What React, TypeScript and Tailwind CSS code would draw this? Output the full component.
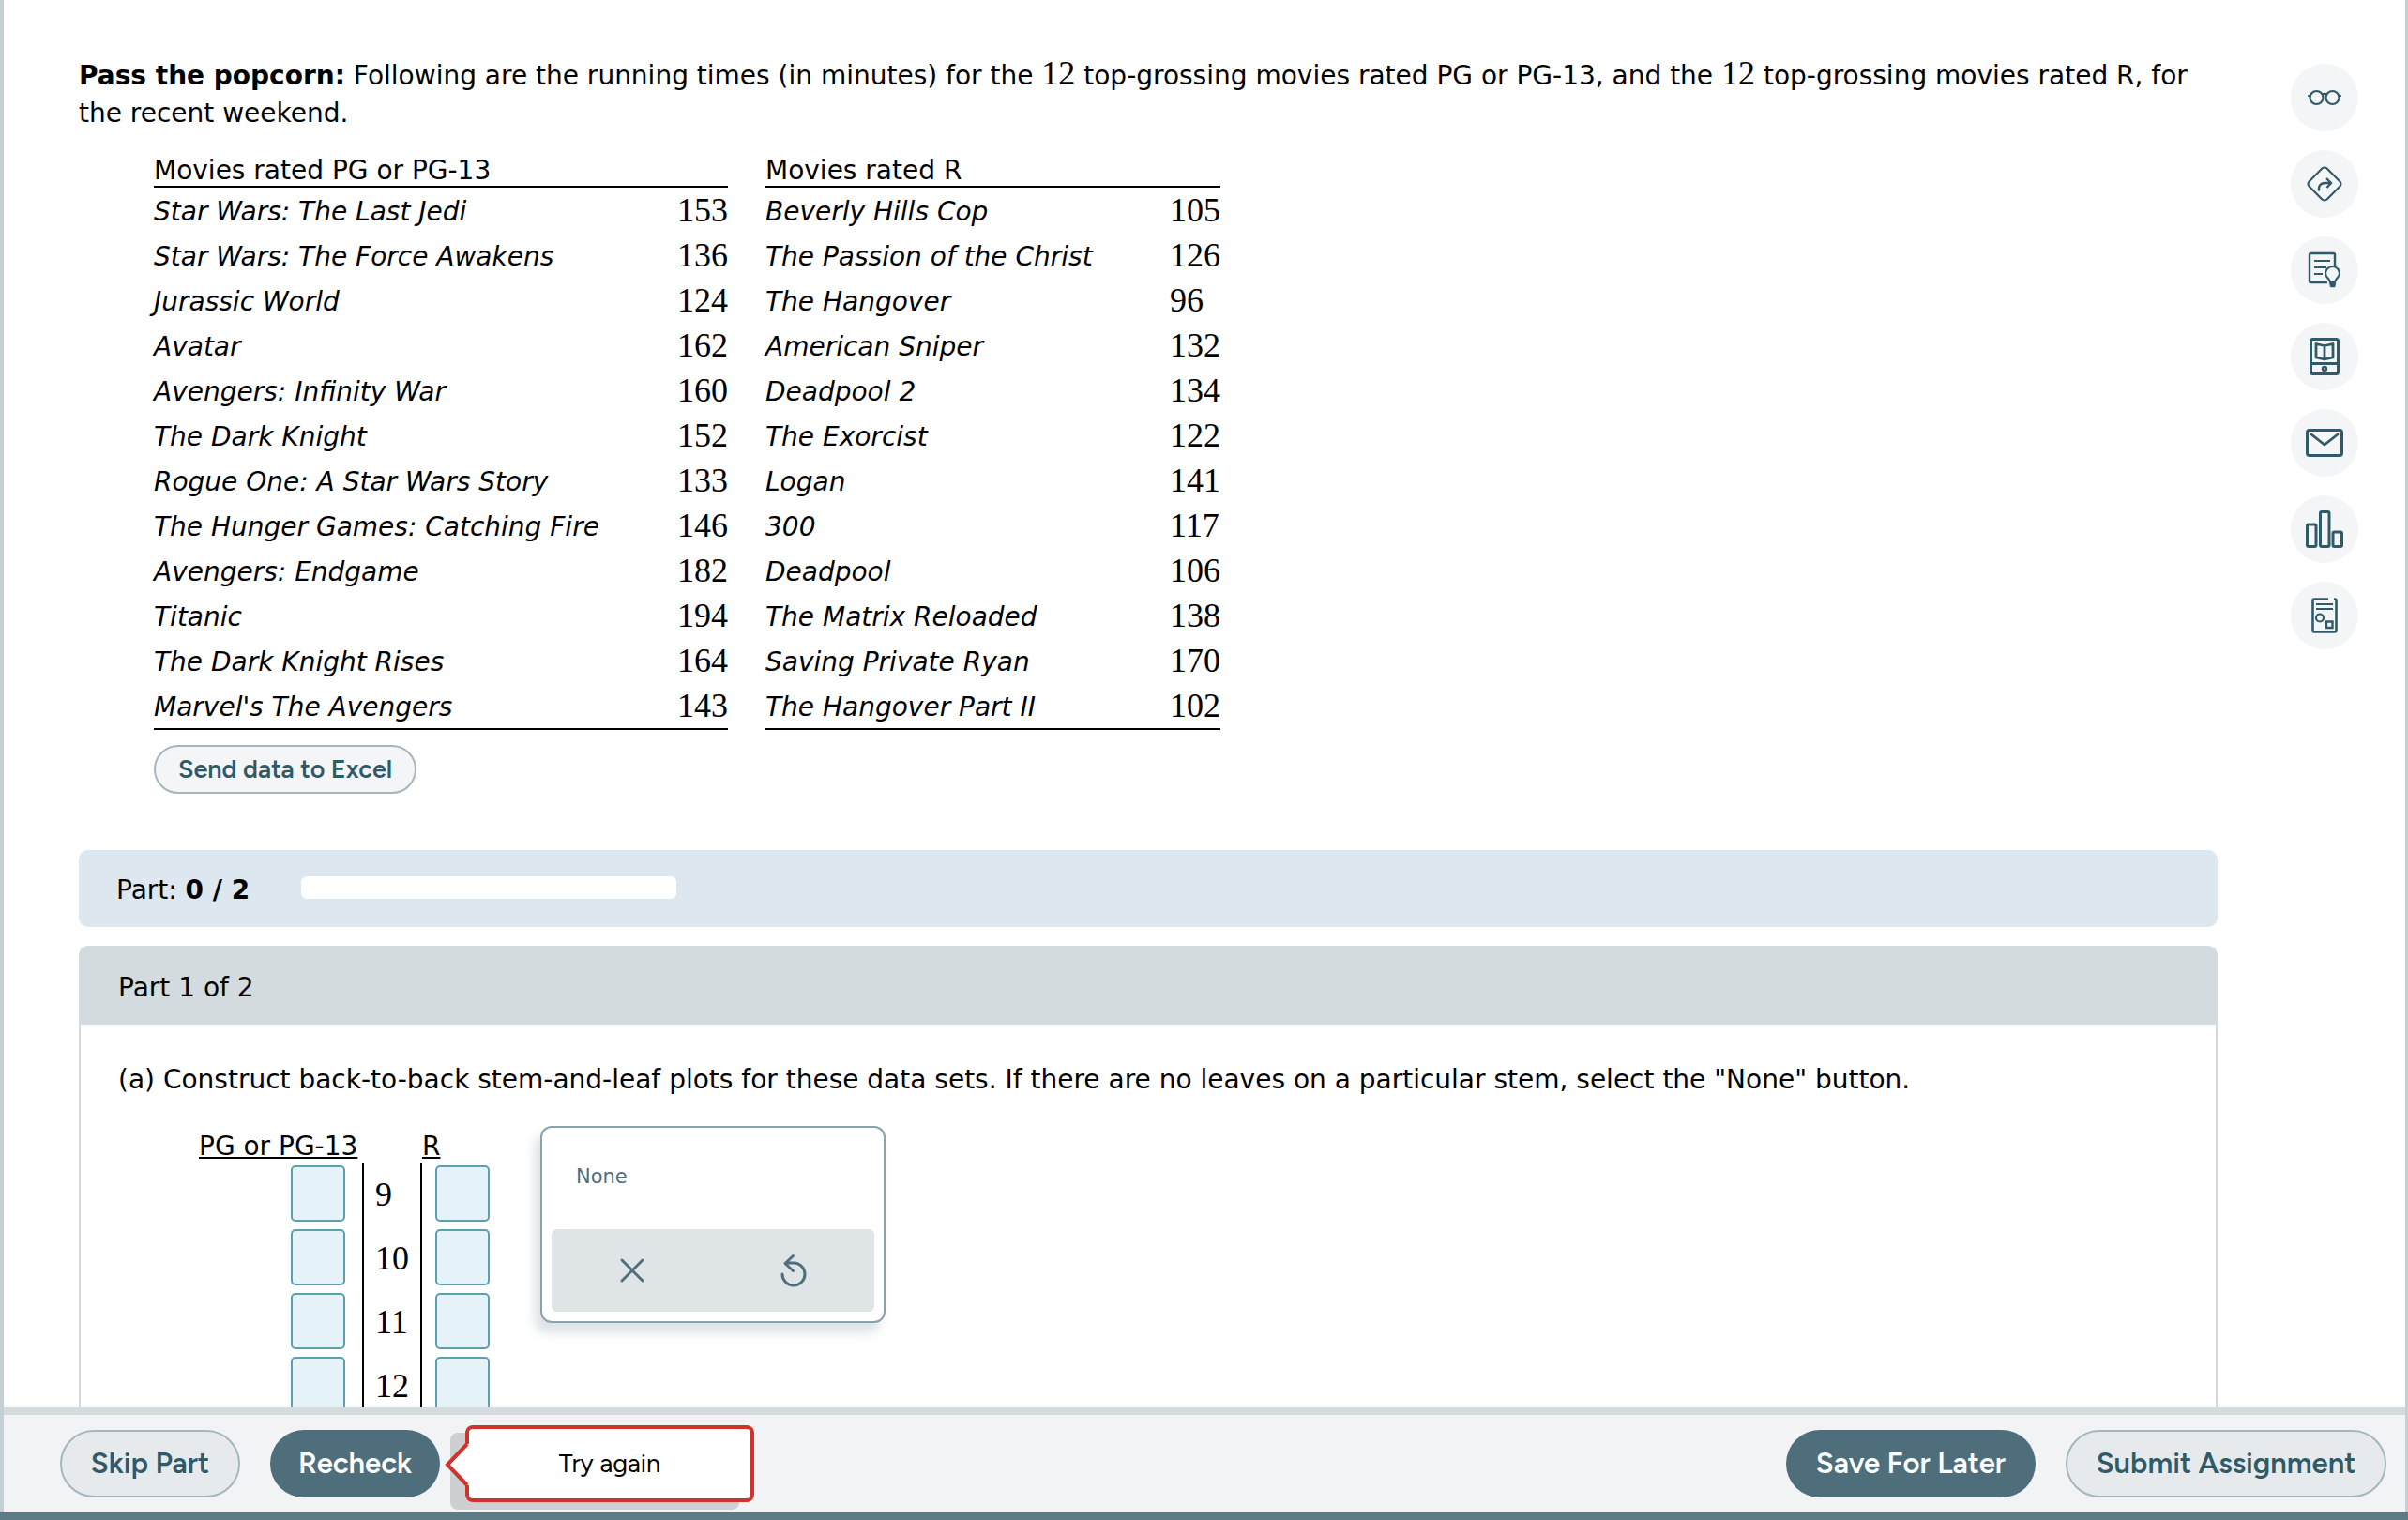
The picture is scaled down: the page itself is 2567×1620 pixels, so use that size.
import type { ReactNode } from "react";

type Movie = [title: string, minutes: number];

const pgMovies: Movie[] = [
  ["Star Wars: The Last Jedi", 153],
  ["Star Wars: The Force Awakens", 136],
  ["Jurassic World", 124],
  ["Avatar", 162],
  ["Avengers: Infinity War", 160],
  ["The Dark Knight", 152],
  ["Rogue One: A Star Wars Story", 133],
  ["The Hunger Games: Catching Fire", 146],
  ["Avengers: Endgame", 182],
  ["Titanic", 194],
  ["The Dark Knight Rises", 164],
  ["Marvel's The Avengers", 143],
];

const rMovies: Movie[] = [
  ["Beverly Hills Cop", 105],
  ["The Passion of the Christ", 126],
  ["The Hangover", 96],
  ["American Sniper", 132],
  ["Deadpool 2", 134],
  ["The Exorcist", 122],
  ["Logan", 141],
  ["300", 117],
  ["Deadpool", 106],
  ["The Matrix Reloaded", 138],
  ["Saving Private Ryan", 170],
  ["The Hangover Part II", 102],
];

const stems = [9, 10, 11, 12];

const serif = "font-['Liberation_Serif',serif] text-[36px] leading-none";
const ui = "font-['Figtree','Proxima_Nova',Lato,sans-serif]";

function Num({ children }: { children: ReactNode }) {
  return <span className={serif}>{children}</span>;
}

function Icon({ children }: { children: ReactNode }) {
  return (
    <svg width="44" height="44" viewBox="0 0 44 44" fill="none" stroke="currentColor" strokeWidth="2.4" strokeLinecap="round" strokeLinejoin="round" aria-hidden="true">
      {children}
    </svg>
  );
}

const tools: { label: string; icon: ReactNode }[] = [
  {
    label: "Reading view",
    icon: (
      <Icon>
        <g strokeWidth="2.2">
          <circle cx="13.5" cy="22" r="7" />
          <circle cx="30.5" cy="22" r="7" />
          <path d="M20 18.500c1-1 3-1 4 0M5 20h2M37 20h2" />
        </g>
      </Icon>
    ),
  },
  {
    label: "Directions",
    icon: (
      <Icon>
        <rect x="8.5" y="8.5" width="27" height="27" rx="4" transform="rotate(45 22 22)" strokeWidth="2.2" />
        <path d="M16 29.500c-.6-6 2-8.500 7-8.500h5M24 16l5 5-4.500 5" strokeLinecap="butt" strokeLinejoin="miter" />
      </Icon>
    ),
  },
  {
    label: "Hints",
    icon: (
      <Icon>
        <path d="M33 17V5.500a1.500 1.500 0 0 0-1.500-1.500h-24A1.500 1.500 0 0 0 6 5.500v28A1.500 1.500 0 0 0 7.500 35H25" strokeWidth="2.400" strokeLinecap="butt" />
        <path d="M11 12h17M11 19h13M11 26h9" strokeWidth="2.200" strokeLinecap="butt" />
        <path d="M28 35c0-4-5-5-5-9.500a7.500 7.500 0 0 1 15 0c0 4.500-5 5.500-5 9.500z" strokeWidth="2.200" />
        <path d="M27.500 36h6.500l-1 4h-4.500z" fill="currentColor" strokeWidth="0.5" />
      </Icon>
    ),
  },
  {
    label: "eBook",
    icon: (
      <Icon>
        <rect x="7.500" y="3.500" width="29" height="37" rx="2" strokeWidth="3" />
        <path d="M7.500 29.500h29" strokeWidth="2.800" />
        <circle cx="22" cy="35" r="2" strokeWidth="2.400" />
        <path d="M22 10.500l-9-2v14.500l9 2 9-2V8.500zM22 10.500V25" strokeWidth="2.800" />
      </Icon>
    ),
  },
  {
    label: "Message",
    icon: (
      <Icon>
        <rect x="3.500" y="8.500" width="37" height="27" rx="2.500" strokeWidth="3" />
        <path d="M8 13l14 11 14-11" strokeWidth="2.800" />
      </Icon>
    ),
  },
  {
    label: "Report",
    icon: (
      <Icon>
        <g strokeWidth="3">
          <rect x="3.500" y="17" width="9.500" height="23.500" rx="1.500" />
          <rect x="17.500" y="3.500" width="9.500" height="37" rx="1.500" />
          <rect x="31" y="25" width="9.500" height="15.500" rx="1.500" />
        </g>
      </Icon>
    ),
  },
  {
    label: "Formula sheet",
    icon: (
      <Icon>
        <path d="M26 4.500H11A1.500 1.500 0 0 0 9.500 6v32A1.500 1.500 0 0 0 11 39.500h22a1.500 1.500 0 0 0 1.500-1.500V6A1.500 1.500 0 0 0 33 4.500H32" strokeWidth="2.600" strokeLinecap="butt" />
        <path d="M13 10h18M13 15h18" strokeWidth="2.200" strokeLinecap="butt" />
        <circle cx="17" cy="24.500" r="4" strokeWidth="2.200" />
        <path d="M24 28.500h6.500V35H24z" strokeWidth="2.400" strokeLinejoin="miter" />
      </Icon>
    ),
  },
];

function LeafBox({ label }: { label: string }) {
  return (
    <button type="button" aria-label={label} className="block h-[60px] w-[58px] rounded-[5px] border-2 border-[#5c9fb0] bg-[#e5f3f8]" />
  );
}

function MovieTable() {
  return (
    <table className="border-separate border-spacing-0 text-left text-[28px]">
      <thead>
        <tr className="h-[40px]">
          <th colSpan={2} className="border-b-2 border-black pt-1.5 font-normal leading-[32px]">Movies rated PG or PG-13</th>
          <td className="w-[40px] min-w-[40px]" />
          <th colSpan={2} className="border-b-2 border-black pt-1.5 font-normal leading-[32px]">Movies rated R</th>
        </tr>
      </thead>
      <tbody>
        {pgMovies.map(([title, minutes], i) => {
          const line = i === pgMovies.length - 1 ? "border-b-2 border-black pt-1 leading-[40px]" : "pt-1 leading-[40px]";
          return (
            <tr key={title} className={i === pgMovies.length - 1 ? "h-[50px]" : "h-[48px]"}>
              <td className={`w-[558px] italic ${line}`}>{title}</td>
              <td className={`w-[54px] ${line}`}><Num>{minutes}</Num></td>
              <td />
              <td className={`w-[431px] italic ${line}`}>{rMovies[i][0]}</td>
              <td className={`w-[54px] ${line}`}><Num>{rMovies[i][1]}</Num></td>
            </tr>
          );
        })}
      </tbody>
    </table>
  );
}

function StemLeafPlot() {
  return (
    <table className="border-separate border-spacing-0 text-[28px]">
      <thead>
        <tr className="h-[40px]">
          <th className="w-[174px] min-w-[174px] p-0 pt-1 text-left font-normal leading-[36px]"><span className="underline decoration-2 underline-offset-2">PG or PG-13</span></th>
          <td className="w-[64px] min-w-[64px] p-0" />
          <th className="p-0 pt-1 text-left font-normal leading-[36px]"><span className="underline decoration-2 underline-offset-2">R</span></th>
        </tr>
      </thead>
      <tbody>
        {stems.map((stem) => (
          <tr key={stem} className="h-[68px]">
            <td className="pr-[18px] pt-[2px] pb-[6px]">
              <div className="flex justify-end"><LeafBox label={`PG or PG-13 leaves for stem ${stem}`} /></div>
            </td>
            <td className="border-x-2 border-black pt-1 pl-3"><Num>{stem}</Num></td>
            <td className="pl-[14px] pt-[2px] pb-[6px]"><LeafBox label={`R leaves for stem ${stem}`} /></td>
          </tr>
        ))}
      </tbody>
    </table>
  );
}

function Palette() {
  return (
    <div className="flex h-[210px] w-[368px] flex-col justify-between rounded-xl border-2 border-[#8aa2ac] bg-white px-[10px] pb-[10px] shadow-[-6px_10px_12px_rgba(80,112,125,0.2)]">
      <div className="flex h-[106px] items-center px-[26px]">
        <button type="button" className="text-[21px] text-[#4f6f7c]">None</button>
      </div>
      <div className="grid h-[88px] grid-cols-2 place-items-center rounded-md bg-[#dfe5e7] text-[#4f6f7c]">
        <button type="button" aria-label="Clear">
          <svg width="28" height="28" viewBox="0 0 28 28" fill="none" stroke="currentColor" strokeWidth="3" strokeLinecap="round" aria-hidden="true">
            <path d="M3 3l22 22M25 3L3 25" />
          </svg>
        </button>
        <button type="button" aria-label="Reset">
          <svg width="32" height="36" viewBox="0 0 32 36" fill="none" stroke="currentColor" strokeWidth="3" strokeLinecap="round" strokeLinejoin="round" aria-hidden="true">
            <path d="M4 22a12 12 0 1 0 12-12H8M15.500 2.500L7 10.500l8.500 8" />
          </svg>
        </button>
      </div>
    </div>
  );
}

function Callout() {
  return (
    <div role="status" className="relative ml-[27px] flex h-[82px] w-[308px] items-center justify-center rounded-lg border-4 border-[#d1322d] bg-white text-[27px] text-black shadow-[-16px_8px_0_#cdcfd1]">
      Try again
      <svg className="absolute top-[13px] left-[-28px]" width="30" height="50" viewBox="0 0 30 50" aria-hidden="true">
        <path d="M30 3L26 3 5 25 26 47 30 47z" fill="#fff" />
        <path d="M26 3L5 25 26 47" fill="none" stroke="#d1322d" strokeWidth="4" />
      </svg>
    </div>
  );
}

const pill = "h-[72px] rounded-full text-[31px] font-semibold";
const solid = "bg-[#4f6e7b] text-white";
const outline = "border-2 border-[#a5b7be] bg-[#e6eaed] text-[#315a68]";

export default function App() {
  return (
    <div className="flex h-screen flex-col overflow-hidden bg-white font-[Verdana,'DejaVu_Sans',sans-serif] text-black">
      <div className="flex min-h-0 flex-1 flex-col border-r-3 border-l-4 border-[#c5d0d5]">
        <div className="flex min-h-0 flex-1 overflow-hidden">
          <main className="min-w-0 flex-1 pt-[60px] pl-20">
            <p className="text-[28px] leading-[40px]">
              <b>Pass the popcorn:</b> Following are the running times (in minutes) for the <Num>12</Num> top-grossing movies rated PG or PG-13, and the <Num>12</Num> top-grossing movies rated R, for the recent weekend.
            </p>

            <div className="mt-[19px] pl-20">
              <MovieTable />
              <button type="button" className={`mt-4 h-[52px] rounded-full border-2 border-[#a5b7be] bg-[#f3f5f7] px-6 text-[27px] font-semibold text-[#315a68] ${ui}`}>
                Send data to Excel
              </button>
            </div>

            <section className="mt-[60px] flex h-[82px] items-center gap-10 rounded-[10px] bg-[#dde7f0] px-10 text-[28px]">
              <span className="w-[157px] pt-1">Part: <b>0 / 2</b></span>
              <div role="progressbar" aria-label="Parts completed" aria-valuemin={0} aria-valuemax={2} aria-valuenow={0} className="mb-0.5 h-6 w-[400px] rounded-md bg-white" />
            </section>

            <section className="mt-5 rounded-t-[10px] border-2 border-[#d3dbde]">
              <h2 className="flex h-[82px] items-center bg-[#d3dbde] px-10 pt-1 text-[28px]">Part 1 of 2</h2>
              <div className="px-10 pt-[39px]">
                <p className="text-[28px] leading-[40px]">
                  (a) Construct back-to-back stem-and-leaf plots for these data sets. If there are no leaves on a particular stem, select the "None" button.
                </p>
                <div className="mt-[29px] flex items-start gap-[54px] pl-[86px]">
                  <StemLeafPlot />
                  <Palette />
                </div>
              </div>
            </section>
          </main>

          <aside className="flex flex-col gap-5 pt-[68px] pr-[50px] pl-[78px]">
            {tools.map(({ label, icon }) => (
              <button key={label} type="button" aria-label={label} className="flex size-[72px] items-center justify-center rounded-full bg-[#f3f5f7] text-[#315a68]">
                {icon}
              </button>
            ))}
          </aside>
        </div>

        <footer className={`flex h-[112px] items-center border-t-8 border-[#d3dbde] bg-[#f1f3f5] pr-5 pl-[60px] ${ui}`}>
          <button type="button" className={`w-[192px] ${pill} ${outline}`}>Skip Part</button>
          <button type="button" className={`ml-8 w-[181px] ${pill} ${solid}`}>Recheck</button>
          <Callout />
          <button type="button" className={`ml-auto w-[266px] ${pill} ${solid}`}>Save For Later</button>
          <button type="button" className={`ml-8 w-[342px] ${pill} ${outline}`}>Submit Assignment</button>
        </footer>
      </div>
      <div className="h-2 bg-[#5d7b85]" />
    </div>
  );
}
